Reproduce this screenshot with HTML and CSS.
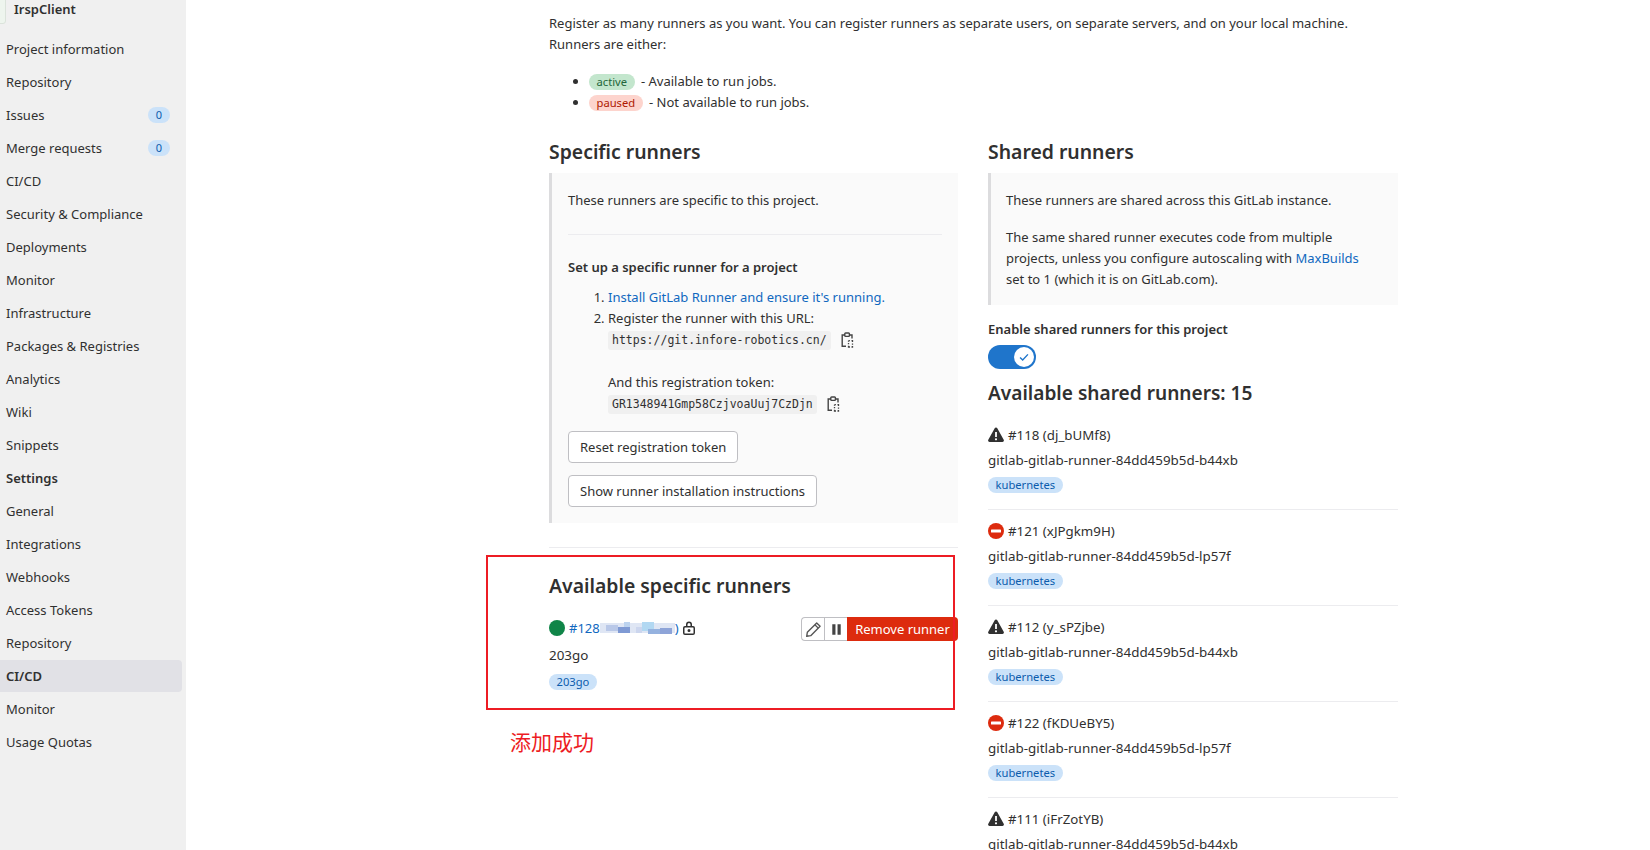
FILE: index.html
```html
<!DOCTYPE html>
<html lang="en">
<head>
<meta charset="utf-8">
<title>CI/CD Settings</title>
<link rel="stylesheet" href="styles.css">
</head>
<body>
<div class="page">
  <aside class="sidebar">
    <div class="project"><span class="avatar"></span><span class="project-name">IrspClient</span></div>
    <nav class="nav">
      <a class="nav-item">Project information</a>
      <a class="nav-item">Repository</a>
      <a class="nav-item">Issues<span class="count">0</span></a>
      <a class="nav-item">Merge requests<span class="count">0</span></a>
      <a class="nav-item">CI/CD</a>
      <a class="nav-item">Security &amp; Compliance</a>
      <a class="nav-item">Deployments</a>
      <a class="nav-item">Monitor</a>
      <a class="nav-item">Infrastructure</a>
      <a class="nav-item">Packages &amp; Registries</a>
      <a class="nav-item">Analytics</a>
      <a class="nav-item">Wiki</a>
      <a class="nav-item">Snippets</a>
      <a class="nav-item nav-strong">Settings</a>
      <a class="nav-item">General</a>
      <a class="nav-item">Integrations</a>
      <a class="nav-item">Webhooks</a>
      <a class="nav-item">Access Tokens</a>
      <a class="nav-item">Repository</a>
      <a class="nav-item nav-active">CI/CD</a>
      <a class="nav-item">Monitor</a>
      <a class="nav-item">Usage Quotas</a>
    </nav>
  </aside>
  <main class="main">
    <p class="intro">Register as many runners as you want. You can register runners as separate users, on separate servers, and on your local machine.<br>Runners are either:</p>
    <ul class="states">
      <li><span class="pill pill-green">active</span> - Available to run jobs.</li>
      <li><span class="pill pill-red">paused</span> - Not available to run jobs.</li>
    </ul>
    <div class="columns">
      <section class="col col-left">
        <h3 class="col-title">Specific runners</h3>
        <div class="note note-left">
          <p class="note-text">These runners are specific to this project.</p>
          <hr class="note-rule">
          <p class="setup-title">Set up a specific runner for a project</p>
          <ol class="steps">
            <li><a class="link">Install GitLab Runner and ensure it's running.</a></li>
            <li>Register the runner with this URL:
              <div class="code-row">
                <code class="code">https://git.infore-robotics.cn/</code>
                <svg class="clip" viewBox="0 0 16 16"><use href="#i-clip"/></svg>
              </div>
              <div class="token-label">And this registration token:</div>
              <div class="code-row">
                <code class="code">GR1348941Gmp58CzjvoaUuj7CzDjn</code>
                <svg class="clip" viewBox="0 0 16 16"><use href="#i-clip"/></svg>
              </div>
            </li>
          </ol>
          <div class="note-btns">
            <button class="btn">Reset registration token</button>
            <button class="btn">Show runner installation instructions</button>
          </div>
        </div>
        <hr class="section-rule">
        <h3 class="col-title avail-title">Available specific runners</h3>
        <div class="my-runner">
          <div class="my-runner-head">
            <span class="dot"></span>
            <a class="link runner-link">#128<svg class="mosaic" viewBox="0 0 75 14"><rect x="0" y="2" width="75" height="10" fill="#dfe6f4"/><rect x="6" y="4" width="12" height="6" fill="#b9c8e8"/><rect x="18" y="6" width="12" height="6" fill="#7f9ad4"/><rect x="24" y="1" width="6" height="5" fill="#bcd3ef"/><rect x="36" y="6" width="6" height="6" fill="#ccd6ee"/><rect x="42" y="1" width="12" height="9" fill="#b2d8f2"/><rect x="48" y="8" width="12" height="5" fill="#95b2df"/><rect x="60" y="7" width="12" height="6" fill="#8ea4d8"/></svg>)</a>
            <svg class="lock" viewBox="0 0 16 16"><use href="#i-lock"/></svg>
          </div>
          <div class="group">
            <button class="group-btn"><svg class="icon-pencil" viewBox="0 0 16 16"><use href="#i-pencil"/></svg></button>
            <button class="group-btn"><svg viewBox="0 0 16 16"><use href="#i-pause"/></svg></button>
            <button class="group-btn group-danger">Remove runner</button>
          </div>
          <div class="runner-name">203go</div>
          <span class="pill pill-blue">203go</span>
        </div>
      </section>
      <section class="col">
        <h3 class="col-title">Shared runners</h3>
        <div class="note note-right">
          <p class="note-text">These runners are shared across this GitLab instance.</p>
          <p class="note-text note-second">The same shared runner executes code from multiple projects, unless you configure autoscaling with <a class="link">MaxBuilds</a> set to 1 (which it is on GitLab.com).</p>
        </div>
        <div class="enable-label">Enable shared runners for this project</div>
        <div class="toggle"><span class="knob"><svg viewBox="0 0 16 16"><path d="M3.5 8.5l3 3 6-6.5" fill="none" stroke="#1f75cb" stroke-width="1.6"/></svg></span></div>
        <h4 class="shared-count">Available shared runners: 15</h4>
        <div class="runner">
          <div class="runner-head"><svg class="status" viewBox="0 0 16 16"><use href="#i-warn"/></svg>#118 (dj_bUMf8)</div>
          <div class="runner-name">gitlab-gitlab-runner-84dd459b5d-b44xb</div>
          <span class="pill pill-blue">kubernetes</span>
        </div>
        <div class="runner">
          <div class="runner-head"><svg class="status" viewBox="0 0 16 16"><use href="#i-fail"/></svg>#121 (xJPgkm9H)</div>
          <div class="runner-name">gitlab-gitlab-runner-84dd459b5d-lp57f</div>
          <span class="pill pill-blue">kubernetes</span>
        </div>
        <div class="runner">
          <div class="runner-head"><svg class="status" viewBox="0 0 16 16"><use href="#i-warn"/></svg>#112 (y_sPZjbe)</div>
          <div class="runner-name">gitlab-gitlab-runner-84dd459b5d-b44xb</div>
          <span class="pill pill-blue">kubernetes</span>
        </div>
        <div class="runner">
          <div class="runner-head"><svg class="status" viewBox="0 0 16 16"><use href="#i-fail"/></svg>#122 (fKDUeBY5)</div>
          <div class="runner-name">gitlab-gitlab-runner-84dd459b5d-lp57f</div>
          <span class="pill pill-blue">kubernetes</span>
        </div>
        <div class="runner">
          <div class="runner-head"><svg class="status" viewBox="0 0 16 16"><use href="#i-warn"/></svg>#111 (iFrZotYB)</div>
          <div class="runner-name">gitlab-gitlab-runner-84dd459b5d-b44xb</div>
          <span class="pill pill-blue">kubernetes</span>
        </div>
      </section>
    </div>
  </main>
  <div class="annot-box"></div>
  <div class="annot-text">添加成功</div>
</div>
<svg class="defs" width="0" height="0">
  <defs>
    <g id="i-clip" fill="none" stroke="#444" stroke-width="1.4">
      <path d="M6 3H3.2v11.3H7"/>
      <path d="M10.8 3H13v3.5"/>
      <rect x="5.8" y="1" width="4.6" height="3.4" rx=".8"/>
      <path d="M9.5 8.7h1.4M12.5 8.7h1v1.2M13.5 11.5v1.3M13.5 14v1h-1M11 15H9.5v-1.2M9.5 12.3v-1.2M9.5 9.8V8.7" stroke-width="1.3"/>
    </g>
    <path id="i-lock" fill="#303030" fill-rule="evenodd" d="M5 6V4.5a3 3 0 0 1 6 0V6h1a2 2 0 0 1 2 2v5a2 2 0 0 1-2 2H4a2 2 0 0 1-2-2V8a2 2 0 0 1 2-2h1zm1.5 0h3V4.5a1.5 1.5 0 0 0-3 0V6zM4 7.5a.5.5 0 0 0-.5.5v5a.5.5 0 0 0 .5.5h8a.5.5 0 0 0 .5-.5V8a.5.5 0 0 0-.5-.5H4zM8 9a1.5 1.5 0 1 1 0 3 1.5 1.5 0 0 1 0-3z"/>
    <g id="i-pencil" fill="none" stroke="#555" stroke-width="1.3" stroke-linejoin="round">
      <path d="M11 1.8l3.2 3.2L5.4 13.8 1.6 14.4l.6-3.8z"/>
      <path d="M9.3 3.5l3.2 3.2"/>
    </g>
    <path id="i-pause" fill="#444" d="M3.5 2.5h3.4v11H3.5zM9.1 2.5h3.4v11H9.1z"/>
    <path id="i-warn" fill="#303030" fill-rule="evenodd" d="M6.7 1.2a1.5 1.5 0 0 1 2.6 0l6.4 11.6a1.5 1.5 0 0 1-1.3 2.2H1.6a1.5 1.5 0 0 1-1.3-2.2L6.7 1.2zM7.1 5h1.8v5H7.1V5zM8 11.2a1.1 1.1 0 1 1 0 2.2 1.1 1.1 0 0 1 0-2.2z"/>
    <g id="i-fail"><circle cx="8" cy="8" r="8" fill="#dd2b0e"/><rect x="3" y="6.4" width="10" height="3.2" rx=".6" fill="#fff"/></g>
  </defs>
</svg>
</body>
</html>
```
FILE: styles.css
```css
* { box-sizing: border-box; }
html, body { margin: 0; height: 850px; overflow: hidden; background: #fff; }
body {
  font-family: "Noto Sans", "Noto Sans CJK SC", sans-serif;
  font-size: 13px;
  line-height: 21px;
  color: #303030;
}
p { margin: 0; }
.defs { position: absolute; }
.page { position: relative; display: flex; height: 850px; overflow: hidden; }

.sidebar { width: 186px; flex: none; height: 850px; background: #f0f0f0; }
.project { display: flex; height: 33px; padding-left: 14px; position: relative; }
.avatar {
  position: absolute; left: -6px; top: -8px; width: 12px; height: 32px;
  background: #eef5ee; border: 1px solid #dbe3db; border-radius: 3px;
}
.project-name { font-weight: 600; line-height: 18px; color: #303030; }
.nav { display: flex; flex-direction: column; }
.nav-item {
  display: flex; align-items: center; justify-content: space-between;
  height: 32px; margin: 0 4px 1px 0; padding: 0 12px 0 6px; border-radius: 0 4px 4px 0; color: #303030;
}
.nav-strong { font-weight: 600; }
.nav-active { background: #e1e1e6; font-weight: 600; }
.count {
  width: 22px; height: 16px; border-radius: 8px; background: #cbe2f9; color: #0b5cad;
  font-size: 11px; line-height: 16px; text-align: center;
}

.main { flex: 1; height: 850px; overflow: hidden; padding: 13px 0 0 363px; }
.states { margin: 16px 0 0; padding: 0 0 0 40px; }
.states li { height: 21px; }
.pill {
  display: inline-block; height: 16px; padding: 0 7.5px; border-radius: 8px;
  font-size: 11.2px; line-height: 16px; vertical-align: 0;
}
.states .pill { margin-right: 3px; }
.pill-green { background: #c3e6cd; color: #24663b; }
.pill-red { background: #fdd4cd; color: #ae1800; }
.pill-blue { background: #cbe2f9; color: #0b5cad; }

.columns { display: flex; gap: 30px; width: 849px; margin-top: 25px; }
.col { width: 410px; }
.col-left { width: 409px; }
.col-title { margin: 0; font-size: 19.4px; font-weight: 600; line-height: 28px; color: #303030; }
.note { background: #fafafa; margin-top: 7px; }
.note-left { height: 350px; border-left: 3px solid #dcdcde; padding: 17px 16px 0 16px; }
.note-right { height: 132px; border-left: 3px solid #dcdcde; padding: 17px 30px 0 15px; }
.note-second { margin-top: 16px; }
.note-rule { height: 1px; border: 0; background: #ececef; margin: 23px 0 22px; }
.setup-title { font-weight: 600; }
.steps { margin: 9px 0 0; padding: 0 0 0 40px; }
.code-row { display: flex; align-items: center; gap: 8px; height: 22px; margin-top: 0; }
.code {
  font-family: "DejaVu Sans Mono", monospace; font-size: 11.5px; line-height: 19px;
  background: #f0f0f0; border-radius: 3px; padding: 0 4px; color: #303030;
}
.clip { width: 16px; height: 16px; }
.token-label { margin-top: 21px; }
.link { color: #1068bf; text-decoration: none; }
.note-btns { display: flex; flex-direction: column; align-items: flex-start; gap: 12px; margin-top: 16px; }
.btn {
  height: 32px; padding: 0 11px; background: #fff; border: 1px solid #bfbfc3; border-radius: 4px;
  font: inherit; color: #303030;
}
.section-rule { height: 1px; border: 0; background: #ececef; margin: 24px 0 0; }
.avail-title { margin-top: 24px; margin-bottom: 0; }

.my-runner { position: relative; margin-top: 16px; }
.my-runner-head { display: flex; align-items: center; height: 24px; }
.dot { width: 16px; height: 16px; border-radius: 50%; background: #108548; margin-right: 4px; }
.runner-link { display: inline-flex; align-items: center; }
.mosaic { width: 75px; height: 14px; }
.lock { width: 16px; height: 16px; margin-left: 2px; }
.group { position: absolute; right: 0; top: 1px; display: flex; height: 24px; }
.group-btn {
  width: 23px; height: 24px; padding: 0; display: flex; align-items: center; justify-content: center;
  background: #fff; border: 1px solid #bfbfc3; border-right: 0; font: inherit;
}
.group-btn:first-child { border-radius: 4px 0 0 4px; }
.group-btn svg { width: 15px; height: 15px; }
.group-btn .icon-pencil { width: 17px; height: 17px; }
.group-danger {
  width: 111px; background: #dd2b0e; border: 0; color: #fff; border-radius: 0 4px 4px 0;
}
.runner-name { font-size: 13.4px; }
.my-runner .runner-name { margin-top: 5px; }
.my-runner .pill { margin-top: 8px; }

.enable-label { margin-top: 14px; font-weight: 600; }
.toggle {
  display: flex; align-items: center; justify-content: flex-end; width: 48px; height: 24px;
  margin-top: 5px; padding-right: 2px; background: #1f75cb; border-radius: 12px;
}
.knob { width: 20px; height: 20px; border-radius: 50%; background: #fff; display: flex; align-items: center; justify-content: center; }
.knob svg { width: 14px; height: 14px; }
.shared-count { margin: 10px 0 7px; font-size: 19.1px; font-weight: 600; line-height: 28px; }
.runner { height: 96px; padding-top: 9px; border-bottom: 1px solid #ececef; }
.runner-head { display: flex; align-items: center; height: 24px; font-size: 13.3px; }
.status { width: 16px; height: 16px; margin-right: 4px; flex: none; }
.runner .runner-name { height: 21px; margin-top: 3px; }
.runner .pill { margin-top: 6px; }

.annot-box {
  position: absolute; left: 486px; top: 555px; width: 469px; height: 155px;
  border: 2px solid #ed1c24;
}
.annot-text {
  position: absolute; left: 510px; top: 725px; font-size: 21px; line-height: 32px; color: #ed1c24;
  font-family: "Noto Sans CJK SC", sans-serif; font-weight: 400;
}
```
